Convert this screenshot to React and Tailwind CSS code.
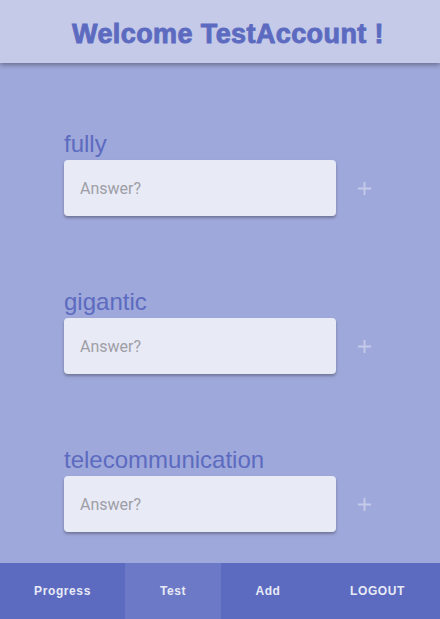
import React from 'react';

const words = ['fully', 'gigantic', 'telecommunication'];

function WordRow({ word }) {
  return (
    <div className="flex flex-col">
      <label className="text-[24px] leading-[28px] text-[#5c6bc0]">{word}</label>
      <div className="mt-[2px] flex items-center">
        <input
          placeholder="Answer?"
          className="h-14 w-[272px] rounded bg-[#e8eaf6] px-4 text-[16px] text-gray-700 shadow-[0_2px_3px_rgba(0,0,0,0.3)] outline-none placeholder:text-[#9e9ea6] font-['Roboto',sans-serif]"
        />
        <button className="ml-[16px] flex h-6 w-6 items-center justify-center text-[#c5cae9]">
          <svg width="15" height="15" viewBox="0 0 16 16" fill="none" stroke="currentColor" strokeWidth="2">
            <path d="M8 1v14M1 8h14" />
          </svg>
        </button>
      </div>
    </div>
  );
}

export default function App() {
  const tabs = [
    { label: 'Progress', active: false },
    { label: 'Test', active: true },
    { label: 'Add', active: false },
    { label: 'LOGOUT', active: false },
  ];

  return (
    <div className="flex h-screen flex-col overflow-hidden bg-[#9fa8da] font-['Liberation_Sans',Arial,sans-serif]">
      {/* HEADER */}
      <header className="relative z-10 flex h-[63px] shrink-0 items-center justify-center bg-[#c5cae9] pt-[5px] shadow-[0_2px_5px_rgba(0,0,0,0.35)]">
        <h1 className="pl-[16px] text-[27px] font-bold tracking-[0.4px] text-[#5c6bc0] [-webkit-text-stroke:0.9px_#5c6bc0]">
          Welcome TestAccount !
        </h1>
      </header>

      {/* WORD LIST */}
      <main className="flex flex-1 flex-col gap-[72px] overflow-hidden pl-16 pt-[67px]">
        {words.map(w => (
          <WordRow key={w} word={w} />
        ))}
      </main>

      {/* BOTTOM NAV */}
      <nav className="grid h-14 shrink-0 grid-cols-[125px_96px_94px_1fr] bg-[#5c6bc0]">
        {tabs.map(t => (
          <button
            key={t.label}
            className={`flex items-center justify-center text-[12px] font-bold tracking-[0.6px] text-[#e8eaf6] ${t.active ? 'bg-[#6c79c6]' : ''}`}
          >
            {t.label}
          </button>
        ))}
      </nav>
    </div>
  );
}
